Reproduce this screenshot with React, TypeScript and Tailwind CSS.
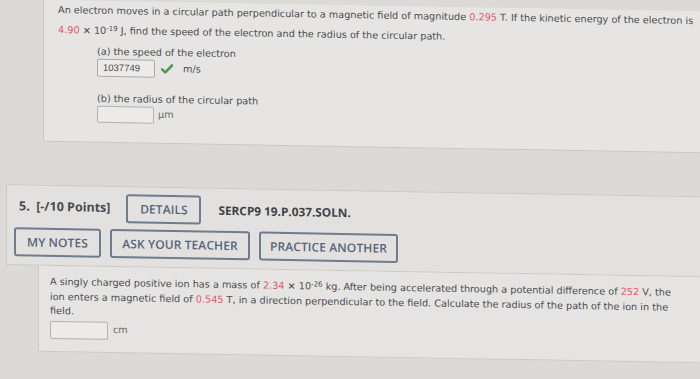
import React from "react"

const red = "text-[#dc5a68]"

function Sup({ children }: { children: React.ReactNode }) {
    return <sup className="text-[7px]">{children}</sup>
}

function Check() {
    return (
        <svg width="12" height="10" viewBox="0 0 12 10" className="ml-[6px] mr-[10px]">
            <path d="M1 5.5 L4.3 8.5 L11 1.5" fill="none" stroke="#4f9a52" strokeWidth="2.6" strokeLinecap="round" strokeLinejoin="round" />
        </svg>
    )
}

function Btn({ label, className = "" }: { label: string; className?: string }) {
    return (
        <div className={`h-[29px] flex items-center justify-center border-2 border-[#6e7c8e] rounded-[3px] text-[12px] font-semibold text-[#56647a] tracking-[0.1px] ${className}`}>
            {label}
        </div>
    )
}

export default function App() {
    return (
        <div className="w-[700px] h-[379px] overflow-hidden bg-[#dbdad7] text-[#4b4d50] font-['DejaVu_Sans',Verdana,sans-serif]">
            <div className="origin-top-left skew-y-[1deg]">
                {/* previous question body */}
                <div className="ml-[43px] h-[142px] border-l border-b border-[#c8c7c4] bg-[#e6e5e3] pl-[14px] text-[9.7px]">
                    <div className="-mt-[1px] leading-[20px] whitespace-nowrap">
                        An electron moves in a circular path perpendicular to a magnetic field of magnitude <span className={red}>0.295</span> T. If the kinetic energy of the electron is
                        <br />
                        <span className={red}>4.90</span> <b className="text-[#555]">×</b> 10<Sup>-19</Sup> J, find the speed of the electron and the radius of the circular path.
                    </div>
                    <div className="ml-[39px] mt-[4px]">
                        <div className="leading-[14px]">(a) the speed of the electron</div>
                        <div className="flex items-center">
                            <div className="w-[58px] h-[18px] border border-[#a9a8a5] rounded-[2px] bg-[#ecebe9] flex items-center pl-[5px] text-[9.5px] font-['Liberation_Sans',Arial,sans-serif] text-[#4a4a4a]">
                                1037749
                            </div>
                            <Check />
                            <span>m/s</span>
                        </div>
                        <div className="leading-[14px] mt-[15px]">(b) the radius of the circular path</div>
                        <div className="flex items-center">
                            <div className="w-[57px] h-[17px] border border-[#b3b2af] rounded-[2px] bg-[#ecebe9]" />
                            <span className="ml-[4px] text-[#6a6a6a]">µm</span>
                        </div>
                    </div>
                </div>

                {/* question 5 */}
                <div className="mt-[43px] ml-[6px] h-[81px] border-l border-t border-b border-[#cbcac7] bg-[#e2e1df] pl-[7px] pt-[7px] font-['Open_Sans',sans-serif]">
                    <div className="flex items-center pl-[5px]">
                        <span className="text-[12.5px] font-bold text-[#494b4e]">5.&nbsp; [-/10 Points]</span>
                        <Btn label="DETAILS" className="ml-[16px] w-[75px]" />
                        <span className="ml-[17px] text-[11.8px] font-bold text-[#404245]">SERCP9 19.P.037.SOLN.</span>
                    </div>
                    <div className="flex mt-[6px] gap-[9px]">
                        <Btn label="MY NOTES" className="w-[87px]" />
                        <Btn label="ASK YOUR TEACHER" className="w-[140px]" />
                        <Btn label="PRACTICE ANOTHER" className="w-[139px]" />
                    </div>
                </div>
                <div className="ml-[38px] h-[86px] border-l border-b border-[#cbcac7] bg-[#e5e4e2] pl-[11px] pt-[9px] text-[9.7px]">
                    <div className="leading-[14.5px] whitespace-nowrap">
                        A singly charged positive ion has a mass of <span className={red}>2.34</span> <b className="text-[#555]">×</b> 10<Sup>-26</Sup> kg. After being accelerated through a potential difference of <span className={red}>252</span> V, the
                        <br />
                        ion enters a magnetic field of <span className={red}>0.545</span> T, in a direction perpendicular to the field. Calculate the radius of the path of the ion in the
                        <br />
                        field.
                    </div>
                    <div className="flex items-center mt-[2px]">
                        <div className="w-[58px] h-[18px] border border-[#b3b2af] rounded-[2px] bg-[#ecebe9]" />
                        <span className="ml-[5px] text-[#6a6a6a]">cm</span>
                    </div>
                </div>
            </div>
        </div>
    )
}
